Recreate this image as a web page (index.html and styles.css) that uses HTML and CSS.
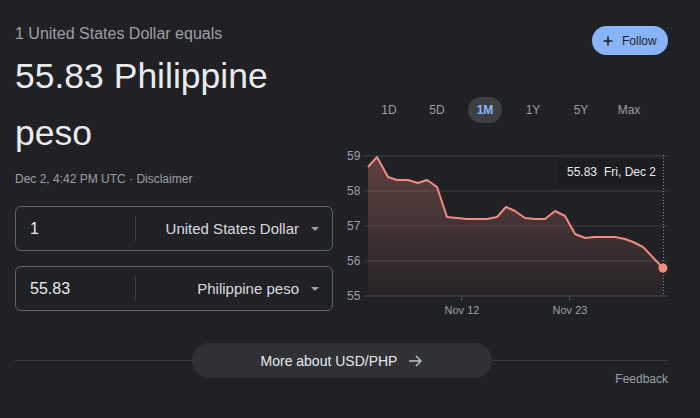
FILE: index.html
```html
<!DOCTYPE html>
<html>
<head>
<meta charset="utf-8">
<link rel="stylesheet" href="styles.css">
</head>
<body>
<div class="page">
  <div class="main">
    <div class="left">
      <div class="sub">1 United States Dollar equals</div>
      <div class="big">55.83 Philippine peso</div>
      <div class="meta">Dec 2, 4:42 PM UTC · <span class="link">Disclaimer</span></div>
      <div class="field">
        <div class="amount">1</div>
        <div class="divider"></div>
        <div class="currency"><span>United States Dollar</span><span class="caret"></span></div>
      </div>
      <div class="field field-second">
        <div class="amount">55.83</div>
        <div class="divider"></div>
        <div class="currency"><span>Philippine peso</span><span class="caret"></span></div>
      </div>
    </div>
    <div class="right">
      <button class="follow">
        <svg class="plus" width="10" height="10" viewBox="0 0 10 10"><path d="M5 0.5V9.5M0.5 5H9.5" stroke="#202124" stroke-width="1.6" fill="none"/></svg>
        <span>Follow</span>
      </button>
      <div class="tabs">
        <div class="tab"><span>1D</span></div>
        <div class="tab"><span>5D</span></div>
        <div class="tab active"><span>1M</span></div>
        <div class="tab"><span>1Y</span></div>
        <div class="tab"><span>5Y</span></div>
        <div class="tab"><span>Max</span></div>
      </div>
      <svg class="chart" width="328" height="175" viewBox="340 145 328 175">
        <defs>
          <linearGradient id="fill" x1="0" y1="156" x2="0" y2="296" gradientUnits="userSpaceOnUse">
            <stop offset="0" stop-color="#f28b82" stop-opacity="0.3"/>
            <stop offset="1" stop-color="#f28b82" stop-opacity="0.03"/>
          </linearGradient>
        </defs>
        <g class="grid">
          <line x1="364" y1="156" x2="668" y2="156"/>
          <line x1="364" y1="191" x2="668" y2="191"/>
          <line x1="364" y1="226" x2="668" y2="226"/>
          <line x1="364" y1="261" x2="668" y2="261"/>
        </g>
        <line class="axis" x1="364" y1="296" x2="668" y2="296"/>
        <line class="axis" x1="461.5" y1="296" x2="461.5" y2="301"/>
        <line class="axis" x1="569.5" y1="296" x2="569.5" y2="301"/>
        <g class="ylab">
          <text x="347" y="160">59</text>
          <text x="347" y="195">58</text>
          <text x="347" y="230">57</text>
          <text x="347" y="265">56</text>
          <text x="347" y="300">55</text>
        </g>
        <g class="xlab">
          <text x="462" y="314">Nov 12</text>
          <text x="570" y="314">Nov 23</text>
        </g>
        <polygon fill="url(#fill)" points="368,167 377,157 388,177 397,180 408,180 418,183 427,180 437,187 447,217 457,218 467,219 477,219 487,219 497,217 506,207 515,211 525,218 535,219 545,219 555,211 565,216 575,234 585,238 595,237 605,237 615,237 625,239 633,242 643,247 663,268 663,296 368,296"/>
        <line class="cursor" x1="663.5" y1="155" x2="663.5" y2="296"/>
        <rect class="tip" x="557" y="159" width="105" height="27"/>
        <text class="tiptext" x="567" y="176">55.83</text>
        <text class="tiptext" x="656" y="176" text-anchor="end">Fri, Dec 2</text>
        <polyline class="line" points="368,167 377,157 388,177 397,180 408,180 418,183 427,180 437,187 447,217 457,218 467,219 477,219 487,219 497,217 506,207 515,211 525,218 535,219 545,219 555,211 565,216 575,234 585,238 595,237 605,237 615,237 625,239 633,242 643,247 663,268"/>
        <circle cx="663" cy="268" r="4.5" fill="#f28b82"/>
      </svg>
    </div>
  </div>
  <div class="footer">
    <div class="rule"></div>
    <button class="more">
      <span>More about USD/PHP</span>
      <svg width="14" height="14" viewBox="0 0 14 14"><path d="M1 7H13M8 2L13 7L8 12" stroke="#bdc1c6" stroke-width="1.5" fill="none"/></svg>
    </button>
    <div class="end">
      <div class="rule"></div>
      <div class="feedback">Feedback</div>
    </div>
  </div>
</div>
</body>
</html>
```

FILE: styles.css
```css
html, body {
  margin: 0;
  padding: 0;
  background: #202124;
}
body {
  font-family: "Liberation Sans", Arial, sans-serif;
  color: #e8eaed;
  width: 700px;
  height: 418px;
  overflow: hidden;
}
.page {
  margin-left: 15px;
  width: 653px;
}
.main {
  display: flex;
  gap: 7px;
}
.left {
  width: 318px;
}
.sub {
  margin-top: 24px;
  font-size: 16px;
  line-height: 20px;
  color: #9aa0a6;
}
.big {
  margin-top: 4px;
  font-size: 35.5px;
  line-height: 57px;
  color: #e8eaed;
}
.meta {
  margin-top: 9px;
  font-size: 12px;
  line-height: 16px;
  color: #9aa0a6;
}
.field {
  margin-top: 19px;
  height: 45px;
  box-sizing: border-box;
  border: 1px solid #5f6368;
  border-radius: 6px;
  display: flex;
  align-items: center;
}
.field-second {
  margin-top: 15px;
}
.amount {
  width: 105px;
  padding-left: 14px;
  font-size: 16px;
  color: #e8eaed;
}
.divider {
  width: 1px;
  height: 25px;
  background: #3c4043;
}
.currency {
  flex: 1;
  display: flex;
  justify-content: flex-end;
  align-items: center;
  padding-right: 13px;
  font-size: 15px;
  color: #dadce0;
}
.caret {
  margin-left: 12px;
  width: 0;
  height: 0;
  border-left: 4px solid transparent;
  border-right: 4px solid transparent;
  border-top: 4px solid #9aa0a6;
}
.right {
  width: 328px;
  display: flex;
  flex-direction: column;
}
.follow {
  align-self: flex-end;
  margin-top: 26px;
  width: 76px;
  height: 29px;
  border: none;
  border-radius: 15px;
  background: #8ab4f8;
  color: #202124;
  display: flex;
  align-items: center;
  padding: 0 0 0 11px;
  gap: 9px;
  font-family: "Liberation Sans", Arial, sans-serif;
  font-size: 12px;
}
.plus {
  display: block;
}
.tabs {
  margin-top: 42px;
  margin-left: 25px;
  display: flex;
  height: 26px;
}
.tab {
  width: 48px;
  display: flex;
  justify-content: center;
  font-size: 12px;
  line-height: 26px;
  color: #9aa0a6;
}
.tab span {
  padding: 0 9px;
  border-radius: 13px;
}
.tab.active span {
  background: #3c4043;
  color: #8ab4f8;
  font-weight: bold;
}
.chart {
  display: block;
  margin-top: 22px;
}
.grid line {
  stroke: #3c4043;
  stroke-width: 1;
}
.axis {
  stroke: #4a4d51;
  stroke-width: 1;
}
.ylab text {
  font-family: "Liberation Sans", Arial, sans-serif;
  font-size: 12px;
  fill: #9aa0a6;
}
.xlab text {
  font-family: "Liberation Sans", Arial, sans-serif;
  font-size: 11px;
  fill: #9aa0a6;
  text-anchor: middle;
}
.cursor {
  stroke: #80868b;
  stroke-width: 1;
  stroke-dasharray: 1 2;
}
.tip {
  fill: #1c1d20;
}
.tiptext {
  font-family: "Liberation Sans", Arial, sans-serif;
  font-size: 12px;
  fill: #e8eaed;
}
.line {
  fill: none;
  stroke: #f28b82;
  stroke-width: 2;
  stroke-linejoin: round;
}
.footer {
  margin-top: 23px;
  display: flex;
  align-items: flex-start;
}
.rule {
  height: 1px;
  background: #3c4043;
}
.footer > .rule {
  flex: 1;
  margin-top: 17px;
}
.more {
  width: 300px;
  height: 35px;
  border: none;
  border-radius: 18px;
  background: #303134;
  color: #e8eaed;
  display: flex;
  align-items: center;
  justify-content: center;
  gap: 11px;
  padding: 0;
  font-family: "Liberation Sans", Arial, sans-serif;
  font-size: 14px;
}
.more svg {
  display: block;
}
.end {
  flex: 1;
  display: flex;
  flex-direction: column;
}
.end .rule {
  margin-top: 17px;
}
.feedback {
  margin-top: 10px;
  text-align: right;
  font-size: 12px;
  line-height: 16px;
  color: #9aa0a6;
}
```
